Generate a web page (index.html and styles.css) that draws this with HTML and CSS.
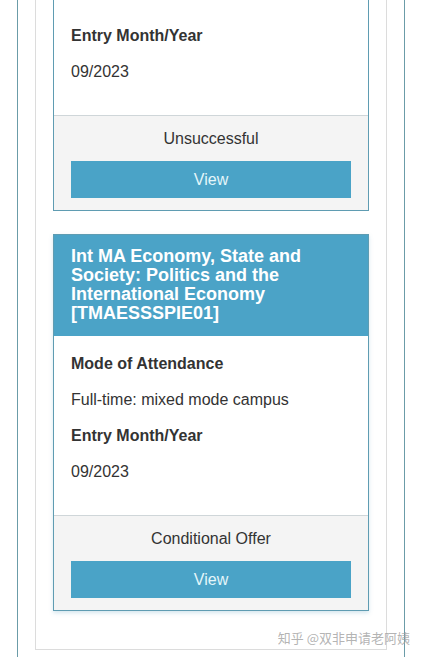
FILE: index.html
```html
<!DOCTYPE html>
<html lang="en">
<head>
    <meta charset="UTF-8">
    <meta name="viewport" content="width=device-width, initial-scale=1.0">
    <title>Applications</title>
    <link rel="stylesheet" href="styles.css">
</head>
<body>
    <div class="frame">
        <div class="panel">
            <div class="card card-cut">
                <div class="card-body">
                    <p class="label">Entry Month/Year</p>
                    <p class="value">09/2023</p>
                </div>
                <div class="card-footer">
                    <p class="status">Unsuccessful</p>
                    <button class="btn">View</button>
                </div>
            </div>

            <div class="card">
                <div class="card-header">
                    Int MA Economy, State and Society: Politics and the International Economy [TMAESSSPIE01]
                </div>
                <div class="card-body">
                    <p class="label">Mode of Attendance</p>
                    <p class="value">Full-time: mixed mode campus</p>
                    <p class="label">Entry Month/Year</p>
                    <p class="value">09/2023</p>
                </div>
                <div class="card-footer">
                    <p class="status">Conditional Offer</p>
                    <button class="btn">View</button>
                </div>
            </div>
        </div>
    </div>
    <div class="watermark">知乎 @双非申请老阿姨</div>
</body>
</html>
```

FILE: styles.css
```css
body {
    margin: 0;
    background-color: #fff;
    font-family: "Liberation Sans", Arial, sans-serif;
    color: #333;
    position: relative;
}

.frame {
    margin: 0 17px;
    min-height: 657px;
    border-left: 1px solid #6b9ca8;
    border-right: 1px solid #6b9ca8;
}

.panel {
    margin: 0 17px;
    padding-bottom: 38px;
    border: 1px solid #dcdcdc;
    border-top: none;
}

.card {
    margin: 0 17px 23px;
    border: 1px solid #5f9cb2;
    background-color: #fff;
}

.card:last-child {
    margin-bottom: 0;
    box-shadow: 0 2px 4px rgba(90, 160, 190, 0.25);
}

.card-cut {
    border-top: none;
}

.card-cut .card-body {
    padding-top: 26px;
}

.card-header {
    background-color: #4ba3c7;
    color: #fff;
    font-size: 18px;
    font-weight: bold;
    line-height: 19px;
    padding: 12px 17px 13px;
}

.card-body {
    padding: 18px 17px 17px;
}

.card-body p {
    margin: 0 0 16px;
    font-size: 16px;
    line-height: 20px;
}

.label {
    font-weight: bold;
}

.card-footer {
    background-color: #f4f4f4;
    border-top: 1px solid #cfd6d9;
    padding: 13px 17px 12px;
    text-align: center;
}

.status {
    margin: 0 0 12px;
    font-size: 16px;
    line-height: 20px;
}

.btn {
    display: block;
    width: 100%;
    height: 37px;
    border: none;
    background-color: #4aa3c7;
    color: #e4f6fa;
    font-family: inherit;
    font-size: 16px;
    cursor: pointer;
}

.watermark {
    position: absolute;
    right: 12px;
    top: 628px;
    font-family: "Noto Sans CJK SC", sans-serif;
    font-size: 13px;
    color: rgba(160, 160, 160, 0.8);
}
```
